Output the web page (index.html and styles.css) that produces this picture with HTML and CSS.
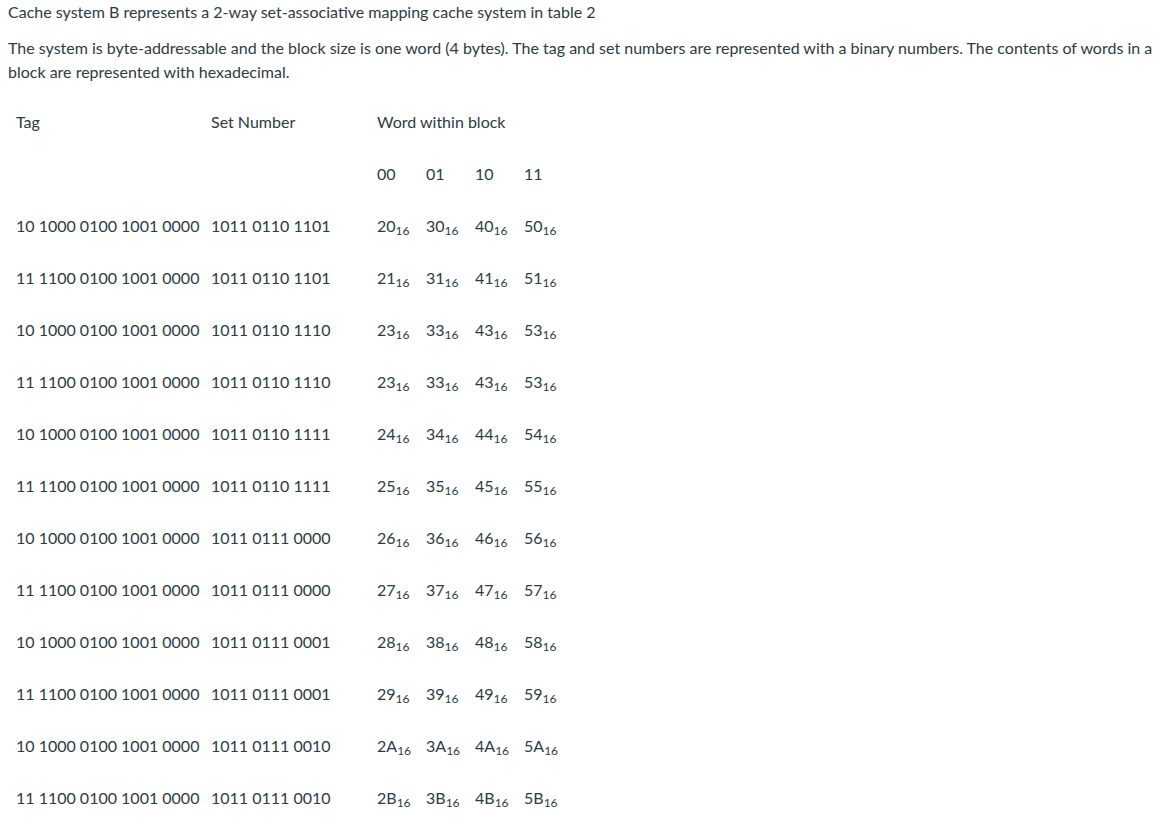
FILE: index.html
```html
<!DOCTYPE html>
<html lang="en">
<head>
  <meta charset="UTF-8">
  <title>Cache system B</title>
  <link rel="stylesheet" href="styles.css">
</head>
<body>

  <div class="content">
    <p>Cache system B represents a 2-way set-associative mapping cache system in table 2</p>
    <p>The system is byte-addressable and the block size is one word (4 bytes). The tag and set numbers are represented with a binary numbers. The contents of words in a block are represented with hexadecimal.</p>

    <table class="cache">
      <tr>
        <td class="tag">Tag</td>
        <td class="set">Set Number</td>
        <td colspan="4">Word within block</td>
      </tr>
      <tr>
        <td></td>
        <td></td>
        <td class="w">00</td>
        <td class="w">01</td>
        <td class="w">10</td>
        <td class="w">11</td>
      </tr>
      <tr><td>10 1000 0100 1001 0000</td><td>1011 0110 1101</td><td>20<sub>16</sub></td><td>30<sub>16</sub></td><td>40<sub>16</sub></td><td>50<sub>16</sub></td></tr>
      <tr><td>11 1100 0100 1001 0000</td><td>1011 0110 1101</td><td>21<sub>16</sub></td><td>31<sub>16</sub></td><td>41<sub>16</sub></td><td>51<sub>16</sub></td></tr>
      <tr><td>10 1000 0100 1001 0000</td><td>1011 0110 1110</td><td>23<sub>16</sub></td><td>33<sub>16</sub></td><td>43<sub>16</sub></td><td>53<sub>16</sub></td></tr>
      <tr><td>11 1100 0100 1001 0000</td><td>1011 0110 1110</td><td>23<sub>16</sub></td><td>33<sub>16</sub></td><td>43<sub>16</sub></td><td>53<sub>16</sub></td></tr>
      <tr><td>10 1000 0100 1001 0000</td><td>1011 0110 1111</td><td>24<sub>16</sub></td><td>34<sub>16</sub></td><td>44<sub>16</sub></td><td>54<sub>16</sub></td></tr>
      <tr><td>11 1100 0100 1001 0000</td><td>1011 0110 1111</td><td>25<sub>16</sub></td><td>35<sub>16</sub></td><td>45<sub>16</sub></td><td>55<sub>16</sub></td></tr>
      <tr><td>10 1000 0100 1001 0000</td><td>1011 0111 0000</td><td>26<sub>16</sub></td><td>36<sub>16</sub></td><td>46<sub>16</sub></td><td>56<sub>16</sub></td></tr>
      <tr><td>11 1100 0100 1001 0000</td><td>1011 0111 0000</td><td>27<sub>16</sub></td><td>37<sub>16</sub></td><td>47<sub>16</sub></td><td>57<sub>16</sub></td></tr>
      <tr><td>10 1000 0100 1001 0000</td><td>1011 0111 0001</td><td>28<sub>16</sub></td><td>38<sub>16</sub></td><td>48<sub>16</sub></td><td>58<sub>16</sub></td></tr>
      <tr><td>11 1100 0100 1001 0000</td><td>1011 0111 0001</td><td>29<sub>16</sub></td><td>39<sub>16</sub></td><td>49<sub>16</sub></td><td>59<sub>16</sub></td></tr>
      <tr><td>10 1000 0100 1001 0000</td><td>1011 0111 0010</td><td>2A<sub>16</sub></td><td>3A<sub>16</sub></td><td>4A<sub>16</sub></td><td>5A<sub>16</sub></td></tr>
      <tr><td>11 1100 0100 1001 0000</td><td>1011 0111 0010</td><td>2B<sub>16</sub></td><td>3B<sub>16</sub></td><td>4B<sub>16</sub></td><td>5B<sub>16</sub></td></tr>
    </table>
  </div>

</body>
</html>
```

FILE: styles.css
```css
body {
  margin: 0 8px;
  font-family: 'Lato', 'Liberation Sans', sans-serif;
  font-size: 16px;
  line-height: 24px;
  color: #2d3b45;
  background: #fff;
}

p {
  margin: 0 0 12px;
}

.cache {
  border-collapse: collapse;
  border-spacing: 0;
  table-layout: fixed;
}

.cache td {
  height: 52px;
  padding: 0 0 0 8px;
  vertical-align: middle;
  white-space: nowrap;
  width: 41px;
}

.cache td.tag {
  width: 187px;
}

.cache td.set {
  width: 158px;
}

.cache sub {
  font-size: 12px;
  line-height: 0;
  vertical-align: -3px;
}
```
